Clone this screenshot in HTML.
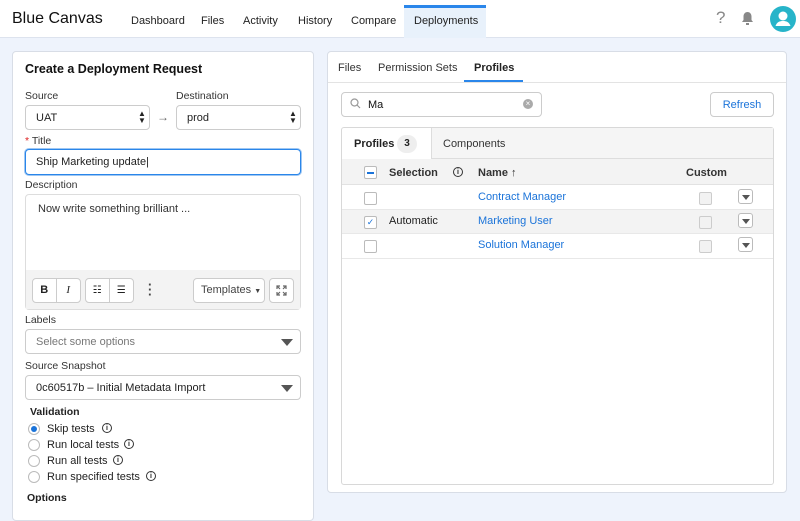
<!DOCTYPE html>
<html><head><meta charset="utf-8"><style>
*{box-sizing:border-box;margin:0;padding:0}
body{width:800px;height:505px;overflow:hidden;background:#eef3fc;font-family:"Liberation Sans",sans-serif;color:#222;font-size:11px;position:relative}
.a{position:absolute}
.nav{left:0;top:0;width:800px;height:38px;background:#fff;border-bottom:1px solid #dde3ee}
.nav span{position:absolute;top:15px;font-size:11px;color:#222}
.card{background:#fff;border:1px solid #d8dde6;border-radius:4px}
.lbl{font-size:10.5px;color:#333}
.inp{border:1px solid #ccc;border-radius:4px;background:#fff;font-size:11px;padding-left:10px;display:flex;align-items:center}
.tri{width:0;height:0;border-left:6px solid transparent;border-right:6px solid transparent;border-top:7px solid #555}
.btn{border:1px solid #ccc;border-radius:4px;background:#fff}
.radio{width:12px;height:12px;border:1px solid #bbb;border-radius:50%;background:#fff}
.info{width:10px;height:10px;border:1px solid #333;border-radius:50%;font-size:7px;text-align:center;line-height:9px;font-weight:bold}
.cb{width:13px;height:13px;border:1px solid #bbb;border-radius:2px;background:#fff}
.cbg{width:13px;height:13px;border:1px solid #ccc;border-radius:2px;background:#f2f2f2}
.dd{width:15px;height:15px;border:1px solid #bbb;border-radius:3px;background:#fff}
.dd:after{content:"";position:absolute;left:3px;top:5px;border-left:4px solid transparent;border-right:4px solid transparent;border-top:5px solid #555}
.link{color:#1a73d9;font-size:11px}
</style></head><body>
<div class="a nav">
 <span style="left:12px;top:10px;font-size:16px;color:#111">Blue Canvas</span>
 <span style="left:131px">Dashboard</span>
 <span style="left:201px">Files</span>
 <span style="left:243px">Activity</span>
 <span style="left:298px">History</span>
 <span style="left:351px">Compare</span>
 <div class="a" style="left:404px;top:5px;width:82px;height:33px;background:#e8f1fb;border-top:3px solid #2a86ea"></div>
 <span style="left:414px">Deployments</span>
 <span style="left:716px;top:8px;font-size:17px;color:#888">?</span>
 <svg class="a" style="left:740px;top:11px" width="15" height="15" viewBox="0 0 15 15"><path d="M7.5 1c2.5 0 4 2 4 4.5v3.5l1.5 2h-11l1.5-2V5.5C3.5 3 5 1 7.5 1z" fill="#888"/><rect x="6" y="12" width="3" height="2" fill="#888"/></svg>
 <svg class="a" style="left:770px;top:6px" width="26" height="26" viewBox="0 0 26 26"><circle cx="13" cy="13" r="13" fill="#27b4c9"/><circle cx="13" cy="10" r="4.5" fill="#fff"/><path d="M5.5 20c1.5-4 4-5 7.5-5s6 1 7.5 5z" fill="#fff"/></svg>
</div>

<div class="a card" style="left:12px;top:51px;width:302px;height:470px"></div>
<div class="a" style="left:25px;top:62px;font-size:12.5px;font-weight:bold;color:#111">Create a Deployment Request</div>
<div class="a lbl" style="left:25px;top:90px">Source</div>
<div class="a lbl" style="left:176px;top:90px">Destination</div>
<div class="a inp" style="left:25px;top:105px;width:125px;height:25px">UAT</div>
<div class="a" style="left:138px;top:110px;font-size:8px;line-height:7px;color:#222">▲<br>▼</div>
<div class="a" style="left:157px;top:110px;font-size:12px;color:#666">→</div>
<div class="a inp" style="left:176px;top:105px;width:125px;height:25px">prod</div>
<div class="a" style="left:289px;top:110px;font-size:8px;line-height:7px;color:#222">▲<br>▼</div>
<div class="a lbl" style="left:25px;top:135px"><span style="color:#d22">* </span>Title</div>
<div class="a inp" style="left:25px;top:149px;width:276px;height:26px;border:1px solid #2a86ea;box-shadow:0 0 0 1px #9fc7f2">Ship Marketing update|</div>
<div class="a lbl" style="left:25px;top:179px">Description</div>
<div class="a" style="left:25px;top:194px;width:276px;height:116px;border:1px solid #ddd;border-radius:4px;background:#fff"></div>
<div class="a" style="left:38px;top:203px;font-size:11px;color:#333">Now write something brilliant ...</div>
<div class="a" style="left:26px;top:270px;width:274px;height:39px;background:#f3f3f3"></div>
<div class="a btn" style="left:32px;top:278px;width:49px;height:25px;display:flex"><div style="width:24px;border-right:1px solid #ccc;text-align:center;line-height:23px;font-weight:bold">B</div><div style="width:24px;text-align:center;line-height:23px;font-style:italic;font-family:'Liberation Serif'">I</div></div>
<div class="a btn" style="left:85px;top:278px;width:49px;height:25px;display:flex"><div style="width:24px;border-right:1px solid #ccc;text-align:center;line-height:23px;font-size:10px">☷</div><div style="width:24px;text-align:center;line-height:23px;font-size:10px">☰</div></div>
<div class="a" style="left:148px;top:282px;font-size:13px;font-weight:bold;line-height:5px;color:#444">·<br>·<br>·</div>
<div class="a btn" style="left:193px;top:278px;width:72px;height:25px;font-size:11px;color:#444;line-height:23px;padding-left:7px">Templates <span style="font-size:7px">▼</span></div>
<div class="a btn" style="left:269px;top:278px;width:25px;height:25px"></div>
<svg class="a" style="left:276px;top:285px" width="11" height="11" viewBox="0 0 11 11" fill="none" stroke="#666" stroke-width="1.2"><path d="M1 4V1h3M1 1l3 3M10 4V1H7M10 1L7 4M1 7v3h3M1 10l3-3M10 7v3H7M10 10L7 7"/></svg>
<div class="a lbl" style="left:25px;top:314px">Labels</div>
<div class="a inp" style="left:25px;top:329px;width:276px;height:25px;color:#777">Select some options</div>
<div class="a tri" style="left:281px;top:339px"></div>
<div class="a lbl" style="left:25px;top:360px">Source Snapshot</div>
<div class="a inp" style="left:25px;top:375px;width:276px;height:25px;color:#222">0c60517b – Initial Metadata Import</div>
<div class="a tri" style="left:281px;top:385px"></div>
<div class="a" style="left:30px;top:406px;font-size:10.5px;font-weight:bold">Validation</div>
<div class="a radio" style="left:28px;top:423px;display:flex;align-items:center;justify-content:center"><div style="width:6px;height:6px;border-radius:50%;background:#1a73d9"></div></div>
<div class="a" style="left:47px;top:423px;font-size:11px">Skip tests</div><div class="a info" style="left:102px;top:423px">i</div>
<div class="a radio" style="left:28px;top:439px"></div>
<div class="a" style="left:47px;top:439px;font-size:11px">Run local tests</div><div class="a info" style="left:124px;top:439px">i</div>
<div class="a radio" style="left:28px;top:455px"></div>
<div class="a" style="left:47px;top:455px;font-size:11px">Run all tests</div><div class="a info" style="left:113px;top:455px">i</div>
<div class="a radio" style="left:28px;top:471px"></div>
<div class="a" style="left:47px;top:471px;font-size:11px">Run specified tests</div><div class="a info" style="left:146px;top:471px">i</div>
<div class="a" style="left:27px;top:492px;font-size:10.5px;font-weight:bold">Options</div>

<div class="a card" style="left:327px;top:51px;width:460px;height:442px"></div>
<div class="a" style="left:328px;top:82px;width:458px;height:1px;background:#e3e3e3"></div>
<div class="a" style="left:338px;top:62px;font-size:11px;color:#333">Files</div>
<div class="a" style="left:378px;top:62px;font-size:11px;color:#333">Permission Sets</div>
<div class="a" style="left:474px;top:62px;font-size:11px;font-weight:bold">Profiles</div>
<div class="a" style="left:464px;top:80px;width:59px;height:2px;background:#2a86ea"></div>
<div class="a inp" style="left:341px;top:92px;width:201px;height:25px;padding-left:26px;color:#111">Ma</div>
<svg class="a" style="left:350px;top:98px" width="11" height="11" viewBox="0 0 11 11"><circle cx="4.5" cy="4.5" r="3.5" fill="none" stroke="#999" stroke-width="1.2"/><path d="M7 7l3 3" stroke="#999" stroke-width="1.2"/></svg>
<div class="a" style="left:523px;top:99px;width:10px;height:10px;border-radius:50%;background:#aaa;color:#fff;font-size:8px;text-align:center;line-height:10px">×</div>
<div class="a btn" style="left:710px;top:92px;width:64px;height:25px;color:#1a73d9;text-align:center;line-height:25px;font-size:11px">Refresh</div>

<div class="a" style="left:341px;top:127px;width:433px;height:358px;border:1px solid #d8d8d8;border-radius:3px;background:#fff"></div>
<div class="a" style="left:431px;top:128px;width:342px;height:31px;background:#f5f5f5;border-left:1px solid #ddd;border-bottom:1px solid #ddd"></div>
<div class="a" style="left:354px;top:138px;font-size:11px;font-weight:bold">Profiles</div>
<div class="a" style="left:397px;top:135px;width:20px;height:18px;border-radius:9px;background:#eee;font-size:10px;font-weight:bold;text-align:center;line-height:18px">3</div>
<div class="a" style="left:443px;top:138px;font-size:11px;color:#333">Components</div>
<div class="a" style="left:342px;top:159px;width:431px;height:26px;background:#f3f3f3;border-bottom:1px solid #e2e2e2"></div>
<div class="a cb" style="left:364px;top:166px;display:flex;align-items:center;justify-content:center"><div style="width:7px;height:2px;background:#1a73d9"></div></div>
<div class="a" style="left:389px;top:167px;font-size:11px;font-weight:bold;color:#333">Selection</div>
<div class="a info" style="left:453px;top:167px">i</div>
<div class="a" style="left:478px;top:167px;font-size:11px;font-weight:bold;color:#333">Name <span style="font-weight:normal">↑</span></div>
<div class="a" style="left:686px;top:167px;font-size:11px;font-weight:bold;color:#333">Custom</div>

<div class="a cb" style="left:364px;top:192px"></div>
<div class="a link" style="left:478px;top:191px">Contract Manager</div>
<div class="a cbg" style="left:699px;top:192px"></div>
<div class="a dd" style="left:738px;top:189px"></div>
<div class="a" style="left:342px;top:209px;width:431px;height:25px;background:#f3f3f3;border-top:1px solid #e8e8e8;border-bottom:1px solid #e8e8e8"></div>
<div class="a cb" style="left:364px;top:216px;color:#1a73d9;font-size:9px;text-align:center;line-height:11px">✓</div>
<div class="a" style="left:389px;top:215px;font-size:11px">Automatic</div>
<div class="a link" style="left:478px;top:215px">Marketing User</div>
<div class="a cbg" style="left:699px;top:216px"></div>
<div class="a dd" style="left:738px;top:213px"></div>
<div class="a cb" style="left:364px;top:240px"></div>
<div class="a link" style="left:478px;top:239px">Solution Manager</div>
<div class="a cbg" style="left:699px;top:240px"></div>
<div class="a dd" style="left:738px;top:237px"></div>
<div class="a" style="left:342px;top:258px;width:431px;height:1px;background:#e8e8e8"></div>
</body></html>
